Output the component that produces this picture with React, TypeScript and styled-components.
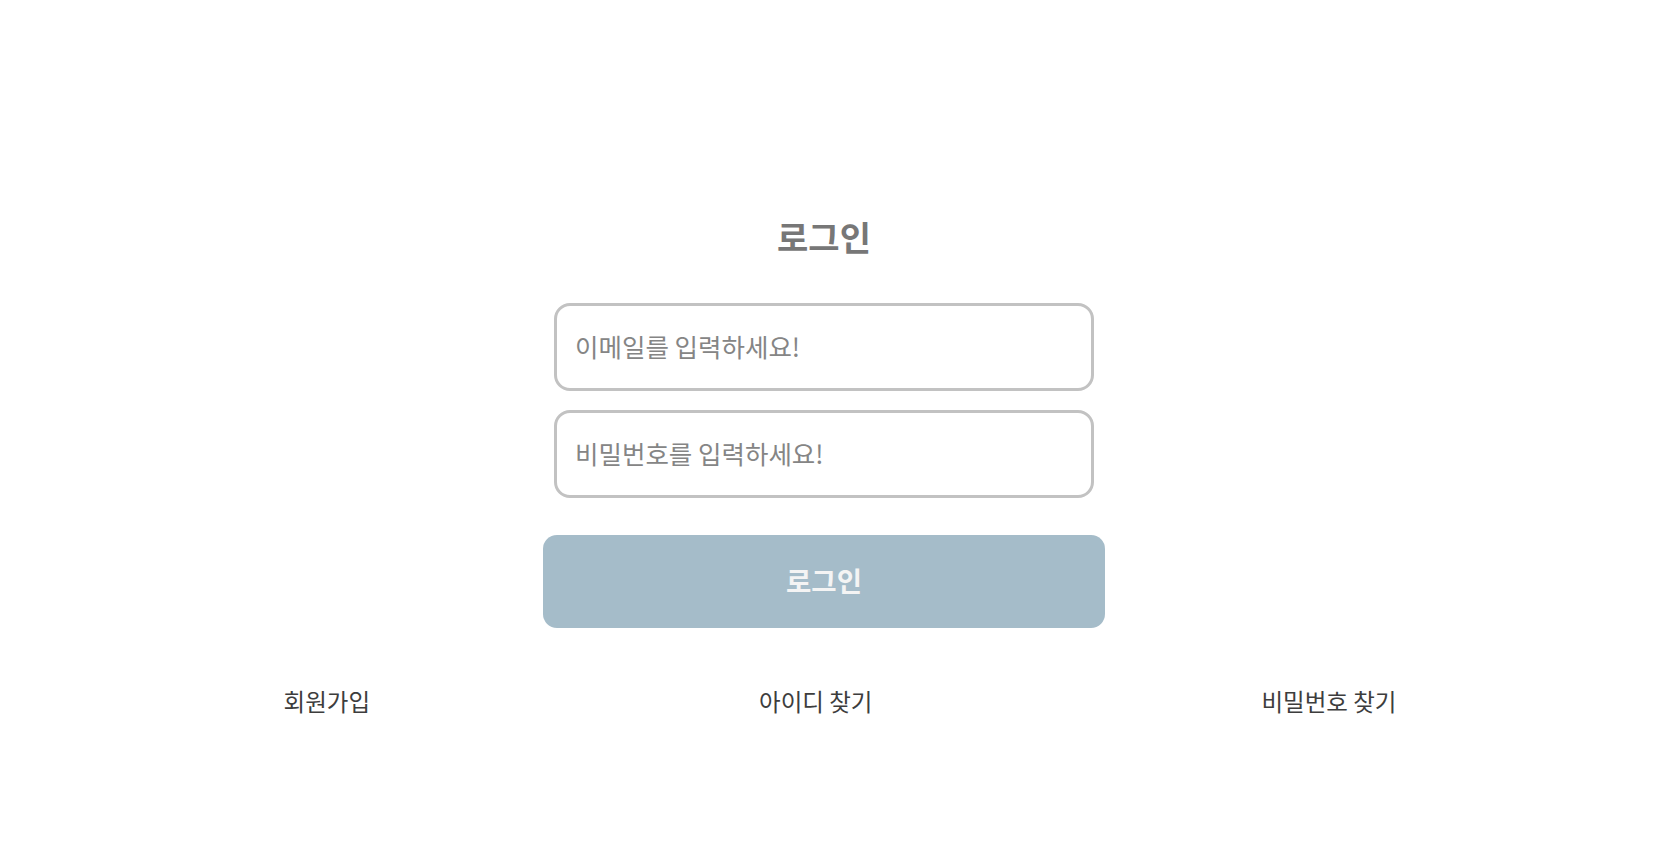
import React from "react";
import styled, { createGlobalStyle } from "styled-components";

const GlobalStyle = createGlobalStyle`
  html, body {
    margin: 0;
    padding: 0;
    background: #ffffff;
  }
  body {
    font-family: "Noto Sans CJK KR", "Noto Sans", sans-serif;
  }
  * { box-sizing: border-box; }
`;

const Page = styled.main`
  width: 100%;
  min-height: 864px;
  padding-top: 216px;
  display: flex;
  flex-direction: column;
  align-items: center;
`;

const Form = styled.form`
  display: flex;
  flex-direction: column;
  align-items: center;
  margin-right: 32px;
`;

const Title = styled.h1`
  margin: 0 0 45px;
  font-size: 34px;
  line-height: 42px;
  font-weight: 700;
  color: #777777;
`;

const Fields = styled.div`
  display: flex;
  flex-direction: column;
  gap: 19px;
`;

const Input = styled.input`
  width: 540px;
  height: 88px;
  border: 3px solid #c2c2c2;
  border-radius: 16px;
  padding: 0 18px 3px;
  font-family: inherit;
  font-size: 25.5px;
  color: #333;
  background: #fff;
  outline: none;
  &::placeholder {
    color: #858585;
  }
`;

const SubmitButton = styled.button`
  margin-top: 37px;
  width: 562px;
  height: 93px;
  border: none;
  border-radius: 14px;
  background: #a5bcc9;
  color: #f4f4f4;
  font-family: inherit;
  font-size: 27.5px;
  font-weight: 700;
  padding-bottom: 4px;
  cursor: pointer;
`;

const Links = styled.nav`
  margin-top: 57px;
  width: 1502px;
  display: flex;
  justify-content: space-around;
`;

const LinkItem = styled.a`
  font-size: 23.5px;
  line-height: 32px;
  color: #3d3d3d;
  text-decoration: none;
  cursor: pointer;
`;

export default function App() {
  return (
    <>
      <GlobalStyle />
      <Page>
        <Form onSubmit={(e) => e.preventDefault()}>
          <Title>로그인</Title>
          <Fields>
            <Input type="email" placeholder="이메일를 입력하세요!" />
            <Input type="password" placeholder="비밀번호를 입력하세요!" />
          </Fields>
          <SubmitButton type="submit">로그인</SubmitButton>
        </Form>
        <Links>
          <LinkItem>회원가입</LinkItem>
          <LinkItem>아이디 찾기</LinkItem>
          <LinkItem>비밀번호 찾기</LinkItem>
        </Links>
      </Page>
    </>
  );
}
